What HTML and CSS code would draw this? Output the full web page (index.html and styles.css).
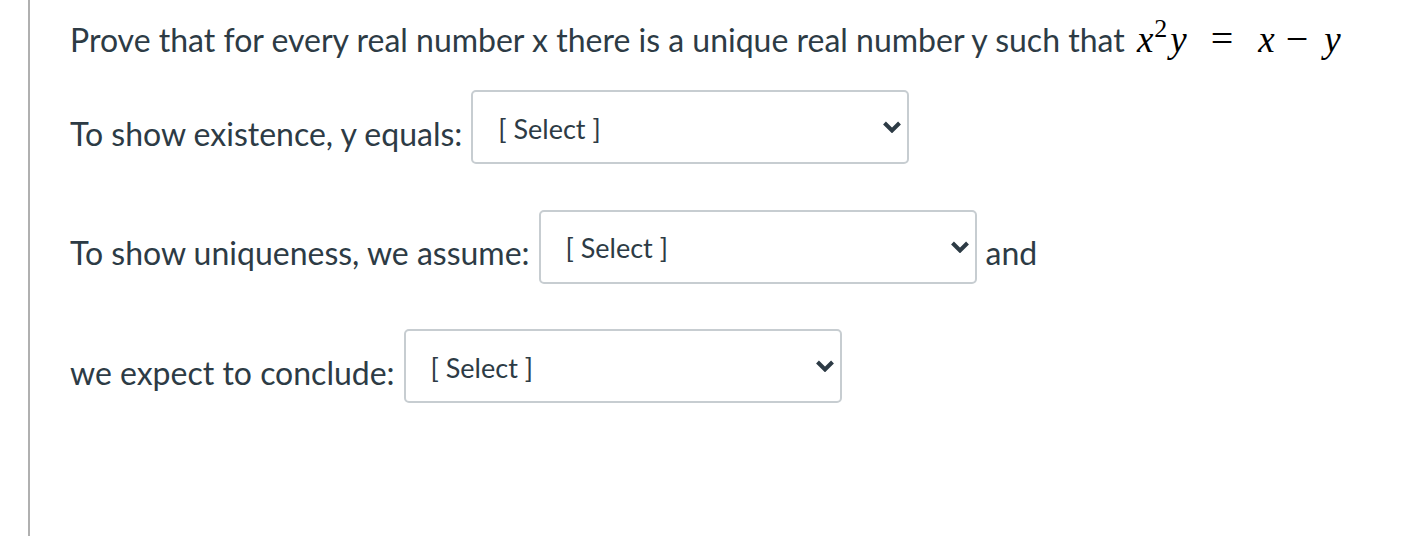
FILE: index.html
```html
<!DOCTYPE html>
<html>
<head>
<meta charset="utf-8">
<link rel="stylesheet" href="styles.css">
</head>
<body>
<div class="question">
  <p class="prompt">Prove that for every real number x there is a unique real number y such that <span class="math"><i>x</i><sup>2</sup><i>y</i><span class="rel">=</span><i>x</i><span class="bin">−</span><i>y</i></span></p>
  <div class="row">
    <span class="label">To show existence, y equals:</span>
    <div class="select"><span class="val">[ Select ]</span><svg class="chev" width="20" height="12" viewBox="0 0 20 12"><path d="M2.5 2 L10 9.5 L17.5 2" fill="none" stroke="#2d3b45" stroke-width="4" stroke-linecap="butt"/></svg></div>
  </div>
  <div class="row">
    <span class="label">To show uniqueness, we assume:</span>
    <div class="select"><span class="val">[ Select ]</span><svg class="chev" width="20" height="12" viewBox="0 0 20 12"><path d="M2.5 2 L10 9.5 L17.5 2" fill="none" stroke="#2d3b45" stroke-width="4" stroke-linecap="butt"/></svg></div>
    <span class="after">and</span>
  </div>
  <div class="row">
    <span class="label">we expect to conclude:</span>
    <div class="select"><span class="val">[ Select ]</span><svg class="chev" width="20" height="12" viewBox="0 0 20 12"><path d="M2.5 2 L10 9.5 L17.5 2" fill="none" stroke="#2d3b45" stroke-width="4" stroke-linecap="butt"/></svg></div>
  </div>
</div>
</body>
</html>
```
FILE: styles.css
```css
html, body {
  margin: 0;
  padding: 0;
  background: #fff;
}
body {
  font-family: Lato, "Open Sans", sans-serif;
  color: #2d3b45;
  font-size: 32px;
}
.question {
  margin-left: 28px;
  border-left: 2px solid #b0b0b0;
  min-height: 536px;
  padding-left: 40px;
  padding-top: 20px;
  box-sizing: border-box;
}
.prompt {
  margin: 0 0 32px 0;
  line-height: 38px;
  height: 38px;
  white-space: nowrap;
}
.math {
  font-family: "Liberation Serif", "DejaVu Serif", serif;
  font-size: 37px;
  margin-left: 4px;
  color: #000;
}
.math i {
  font-style: italic;
}
.math sup {
  font-size: 26px;
  font-style: normal;
  vertical-align: 15px;
  line-height: 0;
  margin-left: 1px;
  margin-right: 3px;
}
.math .rel {
  margin: 0 25px 0 24px;
  font-size: 40px;
}
.math .bin {
  margin: 0 16px 0 11px;
  font-size: 40px;
}
.row {
  display: flex;
  align-items: center;
  height: 74px;
  margin-bottom: 45.5px;
}
.label {
  margin-right: 9px;
  position: relative;
  top: 6px;
}
.select {
  width: 438px;
  height: 74px;
  box-sizing: border-box;
  border: 2px solid #c7cdd1;
  border-radius: 5px;
  display: flex;
  align-items: center;
  justify-content: space-between;
  padding: 0 5px 0 25px;
  font-size: 27px;
}
.val {
  position: relative;
  top: 1px;
}
.chev {
  display: block;
}
.after {
  margin-left: 9px;
  position: relative;
  top: 6px;
}
```
